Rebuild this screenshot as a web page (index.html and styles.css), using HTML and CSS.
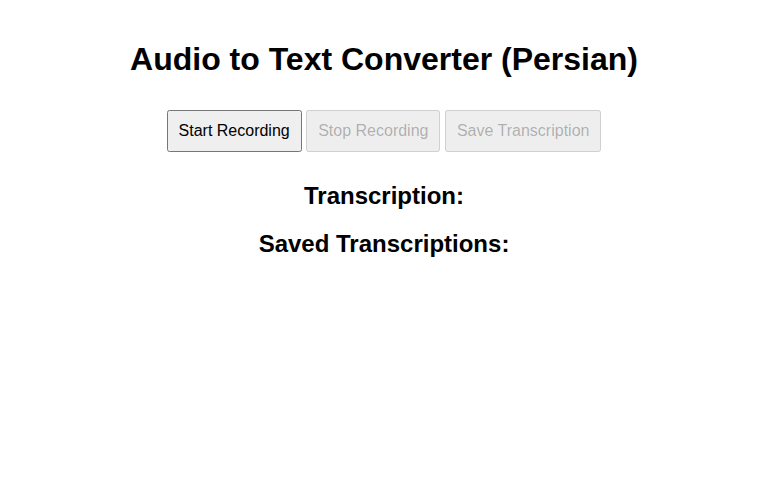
FILE: index.html
```html
<!DOCTYPE html>
<html lang="en">
<head>
    <meta charset="UTF-8">
    <meta name="viewport" content="width=device-width, initial-scale=1.0">
    <title>Audio to Text Converter (Persian)</title>
    <link rel="stylesheet" href="styles.css">
</head>
<body>
    <h1>Audio to Text Converter (Persian)</h1>

    <div class="controls">
        <button id="startBtn">Start Recording</button>
        <button id="stopBtn" disabled>Stop Recording</button>
        <button id="saveBtn" disabled>Save Transcription</button>
    </div>

    <h2>Transcription:</h2>
    <div id="transcription"></div>

    <h2>Saved Transcriptions:</h2>
    <ul id="savedList"></ul>
</body>
</html>
```

FILE: styles.css
```css
body {
    font-family: Arial, "Liberation Sans", sans-serif;
    text-align: center;
    margin: 0;
    padding: 20px;
}

button {
    font-family: Arial, "Liberation Sans", sans-serif;
    font-size: 16px;
    padding: 10px;
    margin: 10px 0;
    cursor: pointer;
}

button:disabled {
    cursor: default;
}

#savedList {
    list-style: none;
    padding: 0;
    margin: 0;
}
```
